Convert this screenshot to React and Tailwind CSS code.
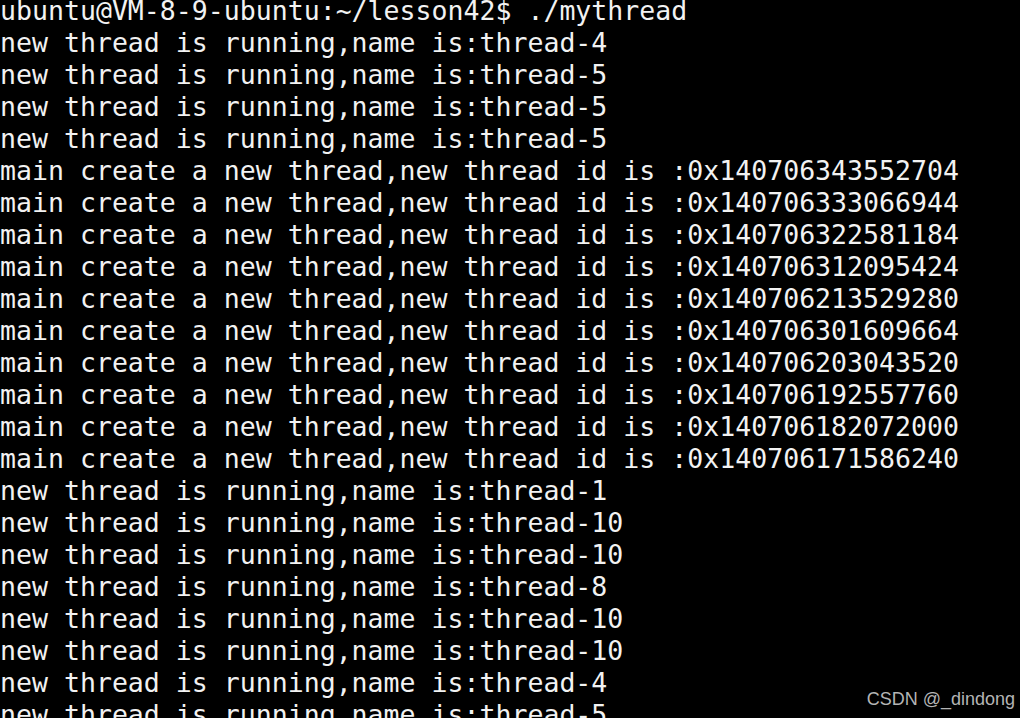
const lines = [
  "ubuntu@VM-8-9-ubuntu:~/lesson42$ ./mythread",
  "new thread is running,name is:thread-4",
  "new thread is running,name is:thread-5",
  "new thread is running,name is:thread-5",
  "new thread is running,name is:thread-5",
  "main create a new thread,new thread id is :0x140706343552704",
  "main create a new thread,new thread id is :0x140706333066944",
  "main create a new thread,new thread id is :0x140706322581184",
  "main create a new thread,new thread id is :0x140706312095424",
  "main create a new thread,new thread id is :0x140706213529280",
  "main create a new thread,new thread id is :0x140706301609664",
  "main create a new thread,new thread id is :0x140706203043520",
  "main create a new thread,new thread id is :0x140706192557760",
  "main create a new thread,new thread id is :0x140706182072000",
  "main create a new thread,new thread id is :0x140706171586240",
  "new thread is running,name is:thread-1",
  "new thread is running,name is:thread-10",
  "new thread is running,name is:thread-10",
  "new thread is running,name is:thread-8",
  "new thread is running,name is:thread-10",
  "new thread is running,name is:thread-10",
  "new thread is running,name is:thread-4",
  "new thread is running,name is:thread-5",
];

export default function App() {
  return (
    <div className="relative w-[1020px] h-[718px] overflow-hidden bg-black">
      <pre className="mt-[-5px] font-['DejaVu_Sans_Mono',monospace] text-[26.55px] leading-[32px] text-[#f2f2f2] whitespace-pre">
        {lines.map((l, i) => (
          <div key={i}>{l}</div>
        ))}
      </pre>
      <div className="absolute right-[5px] bottom-[10px] font-['Liberation_Sans',sans-serif] text-[18px] leading-none text-[#b4b4b4]">
        CSDN @_dindong
      </div>
    </div>
  );
}
